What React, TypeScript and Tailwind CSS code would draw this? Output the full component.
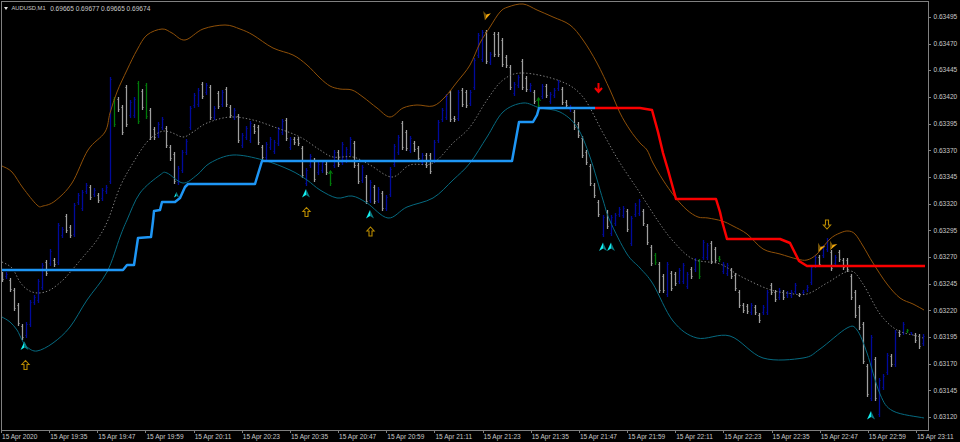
type Bar = [number, number, number, "g" | "b" | "n"];

const bars: Bar[] = [
  [2,272,282,"g"],[6,272,279,"b"],[10,278,292,"g"],[14,288,311,"g"],[18,303,326,"g"],[22,324,340,"g"],[26,322,338,"b"],[30,300,327,"b"],[34,295,305,"b"],[38,279,303,"b"],[42,263,290,"b"],[46,260,276,"g"],[50,249,266,"b"],[54,258,267,"g"],[58,223,265,"b"],[62,227,238,"b"],[66,214,233,"g"],[70,225,238,"g"],[74,203,237,"b"],[78,193,205,"b"],[82,190,211,"b"],[86,183,194,"b"],[90,185,200,"g"],[94,188,197,"b"],[98,193,203,"g"],[102,188,201,"b"],[106,185,194,"b"],
  [110,77,184,"b"],[114,97,127,"n"],[118,97,112,"g"],[122,105,135,"g"],[126,85,127,"g"],[130,100,118,"b"],[134,97,118,"b"],[138,81,124,"n"],[142,89,110,"g"],[146,83,119,"n"],[150,108,140,"g"],[154,127,140,"g"],[158,122,138,"b"],[162,117,130,"b"],[166,126,148,"g"],[170,145,161,"g"],[174,152,184,"g"],[178,166,185,"b"],[182,150,173,"b"],[186,139,155,"b"],[190,106,130,"b"],[194,93,108,"b"],[198,88,107,"b"],[202,82,99,"g"],[206,83,95,"b"],[210,85,120,"g"],[214,106,120,"b"],[218,91,109,"g"],[222,90,107,"b"],[226,87,107,"g"],[230,105,118,"g"],[234,108,120,"b"],[238,114,143,"g"],[242,133,148,"b"],[246,126,140,"b"],[250,121,143,"b"],[254,124,134,"g"],[258,125,145,"g"],[262,145,160,"g"],[266,142,160,"b"],[270,137,150,"b"],[274,140,154,"b"],[278,127,146,"b"],[282,119,135,"b"],[286,118,141,"g"],[290,137,150,"b"],[294,137,145,"g"],[298,137,146,"g"],[302,146,178,"g"],[306,168,186,"b"],[310,154,168,"b"],[314,158,182,"g"],[318,162,175,"b"],
  [322,160,173,"b"],[326,162,175,"g"],[330,171,186,"n"],[334,150,168,"b"],[338,150,167,"g"],[342,142,165,"b"],[346,147,163,"b"],[350,137,156,"b"],[354,141,168,"g"],[358,163,184,"g"],[362,165,183,"b"],[366,175,204,"g"],[370,180,203,"b"],[374,185,204,"g"],[378,187,203,"b"],[382,191,211,"g"],[386,195,211,"b"],[390,167,197,"b"],[394,144,167,"b"],[398,135,155,"b"],[402,121,150,"g"],[406,130,151,"g"],[410,136,153,"b"],[414,141,152,"g"],[418,146,161,"g"],[422,153,165,"b"],[426,153,168,"g"],[430,153,174,"g"],[434,140,163,"b"],[438,120,143,"b"],[442,108,122,"b"],[446,94,120,"b"],[450,90,122,"g"],[454,116,122,"g"],[458,90,121,"b"],[462,88,107,"g"],[466,90,108,"g"],[470,90,106,"b"],[474,58,90,"b"],[478,33,58,"b"],[482,30,62,"b"],[486,30,64,"g"],[490,52,65,"b"],[494,32,57,"g"],[498,32,57,"g"],[502,38,67,"g"],[506,55,68,"g"],[510,65,90,"g"],[514,82,96,"b"],[518,75,88,"b"],[522,59,90,"g"],[526,76,92,"g"],[530,83,92,"b"],[534,90,104,"g"],[538,98,108,"n"],[542,84,99,"b"],[546,84,98,"g"],[550,92,104,"b"],[554,88,98,"b"],[558,80,91,"b"],[562,87,105,"g"],[566,100,108,"g"],[570,105,112,"b"],[574,110,130,"g"],[578,122,138,"g"],[582,136,158,"g"],[586,150,165,"g"],[590,164,186,"g"],[594,183,198,"g"],[598,200,217,"g"],
  [603,215,237,"b"],[607,210,229,"g"],[611,215,236,"b"],[615,213,226,"b"],[619,207,217,"b"],[623,206,218,"b"],[627,209,232,"g"],[631,216,246,"b"],[635,203,217,"b"],[639,199,216,"b"],[643,209,226,"g"],[647,224,245,"g"],[651,245,266,"g"],[655,253,265,"n"],[659,262,293,"g"],[663,274,293,"g"],[667,262,297,"b"],[671,271,291,"g"],[675,272,286,"g"],[679,268,284,"b"],[683,263,284,"b"],[687,272,289,"b"],[691,267,279,"g"],[695,258,272,"b"],[699,259,279,"n"],[703,240,260,"b"],[707,243,260,"b"],[711,241,264,"g"],[715,247,263,"g"],[719,256,262,"n"],[723,262,274,"b"],[727,263,276,"b"],[731,268,279,"g"],[735,273,291,"g"],[739,290,308,"g"],[743,303,313,"g"],[747,304,314,"g"],[751,303,315,"b"],[755,305,315,"g"],[759,313,323,"g"],[763,305,315,"b"],[767,290,315,"b"],[771,283,295,"g"],[775,290,302,"g"],[779,288,300,"b"],[783,290,300,"g"],[787,291,298,"b"],[791,290,298,"b"],[795,283,294,"b"],[799,293,297,"g"],[803,290,295,"b"],[807,285,292,"b"],[811,265,285,"b"],[815,255,268,"b"],[819,255,267,"g"],[823,245,258,"b"],[827,238,252,"b"],[831,250,271,"g"],[835,255,266,"b"],[839,250,262,"g"],[843,258,270,"g"],[847,258,272,"g"],[851,274,300,"g"],[855,290,318,"g"],[859,305,330,"g"],[863,322,364,"g"],[867,364,397,"g"],[871,335,401,"b"],[875,357,401,"g"],[879,378,417,"b"],[883,374,390,"b"],[887,353,375,"b"],[891,354,367,"g"],[895,330,367,"b"],[899,330,337,"g"],[903,322,335,"b"],[907,329,333,"n"],[911,332,335,"b"],[915,333,343,"g"],[919,334,349,"g"],[923,334,346,"b"],
];

const upper: number[][] = [[2,166],[12,172],[23,188],[37,205],[43,206],[55,201],[72,183],[88,150],[105,132],[110,113],[117,92],[127,70],[137,50],[147,35],[162,29],[172,33],[185,40],[203,29],[225,25],[240,29],[253,35],[273,48],[293,55],[307,65],[320,78],[330,86],[340,89],[352,90],[363,97],[377,108],[390,117],[403,108],[417,105],[433,106],[445,97],[457,82],[470,65],[480,43],[490,27],[500,12],[508,7],[523,4],[537,10],[553,17],[570,25],[583,40],[597,63],[610,90],[620,113],[630,130],[640,143],[647,150],[653,163],[663,180],[675,197],[687,210],[698,217],[708,218],[722,221],[733,226],[747,234],[763,249],[780,254],[797,259],[807,260],[817,254],[830,239],[840,233],[848,231],[855,234],[863,246],[873,263],[887,284],[900,298],[913,304],[924,310]];
const middle: number[][] = [[2,262],[12,268],[20,282],[28,290],[38,293],[50,290],[63,280],[72,270],[83,257],[97,240],[108,220],[120,187],[133,163],[147,142],[160,132],[170,132],[183,137],[193,132],[207,123],[230,117],[253,120],[277,128],[300,137],[320,150],[333,157],[353,157],[370,165],[392,177],[410,165],[433,163],[453,143],[470,127],[487,100],[503,80],[523,73],[560,81],[583,97],[603,133],[620,163],[640,193],[658,221],[673,241],[693,259],[720,264],[740,276],[768,289],[787,293],[807,294],[827,283],[850,271],[863,284],[880,314],[897,330],[917,336],[923,338]];
const lower: number[][] = [[2,317],[10,322],[17,330],[22,340],[27,347],[37,351],[53,343],[70,327],[87,300],[107,272],[120,237],[127,220],[140,193],[160,175],[167,173],[183,183],[197,175],[210,163],[233,155],[263,160],[290,170],[307,180],[320,190],[337,198],[352,196],[367,203],[388,218],[407,207],[433,198],[453,180],[470,163],[487,137],[503,112],[523,103],[540,108],[560,112],[577,127],[590,157],[603,200],[610,221],[627,254],[640,268],[653,284],[673,321],[697,338],[730,336],[763,358],[803,358],[820,349],[847,328],[857,330],[867,353],[880,394],[893,411],[924,418]];
const blueLine = "2,270 123,270 127,265 134,265 138,238 151,237 153,221 154,211 160,210 162,202 175,202 180,198 185,187 188,184 255,184 262,161 512,161 519,122 533,122 537,115 539,108 595,108";
const redLine = "595,108 640,108 652,110 658,132 663,153 668,170 676,199 716,199 720,212 722,221 727,239 780,239 790,243 799,261 807,266 925,266";

const prices = ["0.63495","0.63470","0.63445","0.63420","0.63395","0.63370","0.63345","0.63320","0.63295","0.63270","0.63245","0.63220","0.63195","0.63170","0.63145","0.63120"];
const times = ["15 Apr 2020","15 Apr 19:35","15 Apr 19:47","15 Apr 19:59","15 Apr 20:11","15 Apr 20:23","15 Apr 20:35","15 Apr 20:47","15 Apr 20:59","15 Apr 21:11","15 Apr 21:23","15 Apr 21:35","15 Apr 21:47","15 Apr 21:59","15 Apr 22:11","15 Apr 22:23","15 Apr 22:35","15 Apr 22:47","15 Apr 22:59","15 Apr 23:11"];

function smooth(p: number[][]) {
  let d = `M${p[0][0]} ${p[0][1]}`;
  for (let i = 0; i < p.length - 1; i++) {
    const a = p[Math.max(0, i - 1)], b = p[i], c = p[i + 1], e = p[Math.min(p.length - 1, i + 2)];
    d += `C${(b[0] + (c[0] - a[0]) / 6).toFixed(1)} ${(b[1] + (c[1] - a[1]) / 6).toFixed(1)} ${(c[0] - (e[0] - b[0]) / 6).toFixed(1)} ${(c[1] - (e[1] - b[1]) / 6).toFixed(1)} ${c[0]} ${c[1]}`;
  }
  return d;
}

function stems(kind: string) {
  return bars
    .filter((b) => b[3] === kind)
    .map(([x, hi, lo]) => `M${x + 0.5} ${hi}V${lo}`)
    .join("");
}

function ticks(kind: string) {
  return bars
    .filter((b) => b[3] === kind)
    .map(([x, hi, lo]) => {
      const X = x + 0.5;
      const open = kind === "b" ? lo - 2.5 : hi + 2.5;
      const close = kind === "b" ? hi + 2.5 : lo - 2.5;
      return `M${X - 1.3} ${open}H${X}M${X} ${close}H${X + 1.3}`;
    })
    .join("");
}

const Hollow = ({ x, y, down }: { x: number; y: number; down?: boolean }) => (
  <path
    transform={`translate(${x} ${y})${down ? " rotate(180)" : ""}`}
    d="M0 -5L3.6 -1H1.5V4H-1.5V-1H-3.6Z"
    fill="none"
    stroke="#b88a00"
    strokeWidth="1.1"
  />
);

const Cyan = ({ x, y, s = 1 }: { x: number; y: number; s?: number }) => (
  <g transform={`translate(${x} ${y}) scale(${s})`}>
    <path d="M0 -4.5L-4 4L0 1.5Z" fill="#14f0f0" />
    <path d="M0 -4.5L4 4L0 1.5Z" fill="#0a7c84" />
  </g>
);

const Gold = ({ x, y, r }: { x: number; y: number; r: number }) => (
  <g transform={`translate(${x} ${y}) rotate(${r})`}>
    <path d="M0 4.5L-4 -4L0 -1.5Z" fill="#7a5808" />
    <path d="M0 4.5L4 -4L0 -1.5Z" fill="#f5a80c" />
  </g>
);

export default function App() {
  return (
    <div className="flex h-[442px] w-[960px] flex-col overflow-hidden bg-black pl-px pt-px font-['Liberation_Sans',sans-serif] text-[6.55px] leading-none text-[#c8c8c8]">
      <div className="flex">
        <div className="relative h-[430px] w-[928px] border border-[#808080]">
          <div className="absolute left-[2px] top-[3.5px] flex items-center whitespace-nowrap">
            <span className="mr-[2px] h-0 w-0 border-x-[2.5px] border-t-[3px] border-x-transparent border-t-[#e0e0e0]" />
            <span className="ml-[1.5px] mr-[4.5px] text-[5.8px]">AUDUSD,M1</span>
            <span>0.69665 0.69677 0.69665 0.69674</span>
          </div>
          <svg className="block h-[428px] w-[926px]" viewBox="2 2 926 428" fill="none">
            <path d={stems("b")} stroke="#000a9c" strokeWidth="1.3" />
            <path d={stems("n")} stroke="#007a0a" strokeWidth="1.3" />
            <path d={stems("g")} stroke="#a0a0a0" strokeWidth="1.25" />
            <path d={ticks("b")} stroke="#000a9c" strokeWidth="0.7" />
            <path d={ticks("n")} stroke="#007a0a" strokeWidth="0.7" />
            <path d={ticks("g")} stroke="#a0a0a0" strokeWidth="0.7" />
            <path d="M328.5 174L330.5 170.5L332.5 174M536.5 101L538.5 97.5L540.5 101" stroke="#007a0a" strokeWidth="1" />
            <path d={smooth(upper)} stroke="#8f5008" strokeWidth="1" />
            <path d={smooth(lower)} stroke="#066a80" strokeWidth="1" />
            <path d={smooth(middle)} stroke="#7f7f7f" strokeWidth="1" strokeDasharray="1.4 2" />
            <polyline points={redLine} stroke="#fa0000" strokeWidth="2.5" strokeLinejoin="round" />
            <polyline points={blueLine} stroke="#1e96f5" strokeWidth="2.5" strokeLinejoin="round" />
            <path d="M598.5 83V92M595 88L598.5 92L602 88" stroke="#f00000" strokeWidth="2" />
            <Hollow x={25.5} y={365.5} />
            <Hollow x={306.5} y={212.5} />
            <Hollow x={370.5} y={232} />
            <Hollow x={827} y={224} down />
            <Cyan x={24.5} y={346} />
            <Cyan x={176.5} y={195} s={0.65} />
            <Cyan x={306} y={193.5} />
            <Cyan x={370} y={214.5} />
            <Cyan x={603} y={247} />
            <Cyan x={611} y={247} />
            <Cyan x={871} y={415.5} />
            <Gold x={486} y={16} r={15} />
            <Gold x={820} y={248} r={25} />
            <Gold x={832} y={246} r={25} />
          </svg>
        </div>
        <div className="flex flex-col pt-[3px]">
          {prices.map((p) => (
            <div key={p} className="flex h-[26.7px] items-center">
              <span className="mr-[2.5px] h-px w-[2px] bg-[#808080]" />
              <span>{p}</span>
            </div>
          ))}
        </div>
      </div>
      <div className="flex">
        {times.map((t) => (
          <div key={t} className="relative h-[11px] w-[48.17px] shrink-0 whitespace-nowrap pl-px pt-[2.5px]">
            <span className="absolute left-0 top-0 h-[2px] w-px bg-[#808080]" />
            {t}
          </div>
        ))}
      </div>
    </div>
  );
}
